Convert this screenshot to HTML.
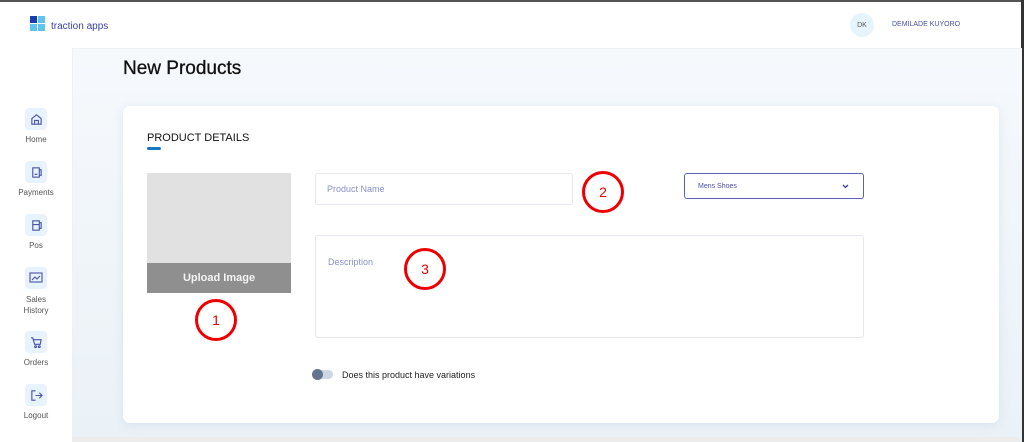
<!DOCTYPE html>
<html><head><meta charset="utf-8"><style>
*{margin:0;padding:0;box-sizing:border-box}
body{width:1024px;height:442px;overflow:hidden;background:#fff;font-family:"Liberation Sans",sans-serif;position:relative}
.abs{position:absolute}
.main{left:72px;top:48px;width:950px;height:394px;background:linear-gradient(#f6f9fc,#eaf1f7);border-top:1px solid #eef1f4;border-left:1px solid #eef1f4}
.card{left:123px;top:106px;width:876px;height:317px;background:#fff;border-radius:7px;box-shadow:0 2px 10px rgba(180,200,220,.3)}
.nav{left:0;width:72px;text-align:center;font-size:8px;color:#555}
.ic{width:22px;height:22px;margin:0 auto 5px;background:#e8f4fd;border-radius:4px;display:flex;align-items:center;justify-content:center}
.circ{width:42px;height:42px;border:3px solid #e00;border-radius:50%;color:#e00;font-size:14px;display:flex;align-items:center;justify-content:center}
</style></head><body>
<div class="abs" style="left:0;top:0;width:1024px;height:2px;background:#555"></div>
<div class="abs" style="right:0;top:0;width:3px;height:442px;background:#333"></div>
<div class="abs" style="left:30px;top:16px;width:7px;height:7px;background:#1a3db0"></div>
<div class="abs" style="left:38px;top:16px;width:7px;height:7px;background:#5fc3f0"></div>
<div class="abs" style="left:30px;top:24px;width:7px;height:7px;background:#5fc3f0"></div>
<div class="abs" style="left:38px;top:24px;width:7px;height:7px;background:#5fc3f0"></div>
<div class="abs" style="left:51px;top:21px;font-size:10px;color:#3a3fa0">traction apps</div>
<div class="abs" style="left:850px;top:13px;width:24px;height:24px;border-radius:50%;background:#e6f5fd;font-size:7px;color:#555;display:flex;align-items:center;justify-content:center">DK</div>
<div class="abs" style="left:892px;top:21px;font-size:7px;color:#4a50a8">DEMILADE KUYORO</div>
<div class="abs main"></div>
<div class="abs" style="left:123px;top:58px;font-size:19px;color:#111;-webkit-text-stroke:0.3px #111">New Products</div>
<div class="abs card"></div>
<div class="abs" style="left:147px;top:132px;font-size:11px;color:#111">PRODUCT DETAILS</div>
<div class="abs" style="left:147px;top:147px;width:14px;height:3px;background:#1877c5;border-radius:2px"></div>
<div class="abs" style="left:147px;top:173px;width:144px;height:90px;background:#e1e1e1"></div>
<div class="abs" style="left:147px;top:263px;width:144px;height:30px;background:#8f8f8f;color:#f4f4f4;font-size:11px;font-weight:bold;display:flex;align-items:center;justify-content:center">Upload Image</div>
<div class="abs circ" style="left:195px;top:299px">1</div>
<div class="abs" style="left:315px;top:173px;width:258px;height:32px;border:1px solid #e5e8f0;border-radius:3px;font-size:9px;color:#8a90c8;padding:10px 0 0 11px">Product Name</div>
<div class="abs circ" style="left:582px;top:171px">2</div>
<div class="abs" style="left:684px;top:173px;width:180px;height:26px;border:1px solid #5a5fb8;border-radius:3px;font-size:7px;color:#4a50a8;padding:9px 0 0 13px">Mens Shoes<svg style="position:absolute;right:14px;top:10px" width="7" height="5" viewBox="0 0 7 5"><path d="M1 1l2.5 2.5L6 1" fill="none" stroke="#3a3fa0" stroke-width="1.3"/></svg></div>
<div class="abs" style="left:315px;top:235px;width:549px;height:103px;border:1px solid #e5e8f0;border-radius:3px;font-size:9px;color:#8a90c8;padding:21px 0 0 12px">Description</div>
<div class="abs circ" style="left:404px;top:248px">3</div>
<div class="abs" style="left:312px;top:370px;width:21px;height:9px;border-radius:5px;background:#cdd6e2"></div>
<div class="abs" style="left:312px;top:369px;width:11px;height:11px;border-radius:50%;background:#64748f"></div>
<div class="abs" style="left:342px;top:370px;font-size:9px;color:#222">Does this product have variations</div>
<div class="abs" style="left:72px;top:437px;width:948px;height:5px;background:#ececec"></div>
<div class="abs nav" style="top:108px"><div class="ic"><svg width="13" height="13" viewBox="0 0 14 14" fill="none" stroke="#4a50a8" stroke-width="1.2"><path d="M2 6l5-4 5 4v6H2z M5 12V8h4v4"/></svg></div>Home</div>
<div class="abs nav" style="top:161px"><div class="ic"><svg width="13" height="13" viewBox="0 0 14 14" fill="none" stroke="#4a50a8" stroke-width="1.2"><rect x="3" y="2" width="7" height="10"/><path d="M10 4h2v6h-2M5 9h3"/></svg></div>Payments</div>
<div class="abs nav" style="top:214px"><div class="ic"><svg width="13" height="13" viewBox="0 0 14 14" fill="none" stroke="#4a50a8" stroke-width="1.2"><rect x="3" y="2" width="7" height="10"/><path d="M10 4h2v6h-2M3 6h7"/></svg></div>Pos</div>
<div class="abs nav" style="top:267px;line-height:11px"><div class="ic"><svg width="14" height="12" viewBox="0 0 14 12" fill="none" stroke="#4a50a8" stroke-width="1.1"><rect x="1" y="1" width="12" height="9"/><path d="M3 8l3-3 2 2 3-3"/></svg></div>Sales<br>History</div>
<div class="abs nav" style="top:331px"><div class="ic"><svg width="13" height="13" viewBox="0 0 14 14" fill="none" stroke="#4a50a8" stroke-width="1.2"><path d="M1 2h2l2 7h6l1-5H4"/><circle cx="6" cy="11.5" r="1"/><circle cx="10" cy="11.5" r="1"/></svg></div>Orders</div>
<div class="abs nav" style="top:384px"><div class="ic"><svg width="13" height="13" viewBox="0 0 14 14" fill="none" stroke="#4a50a8" stroke-width="1.2"><path d="M6 2H2v10h4M6 7h7M10 4l3 3-3 3"/></svg></div>Logout</div>
</body></html>
